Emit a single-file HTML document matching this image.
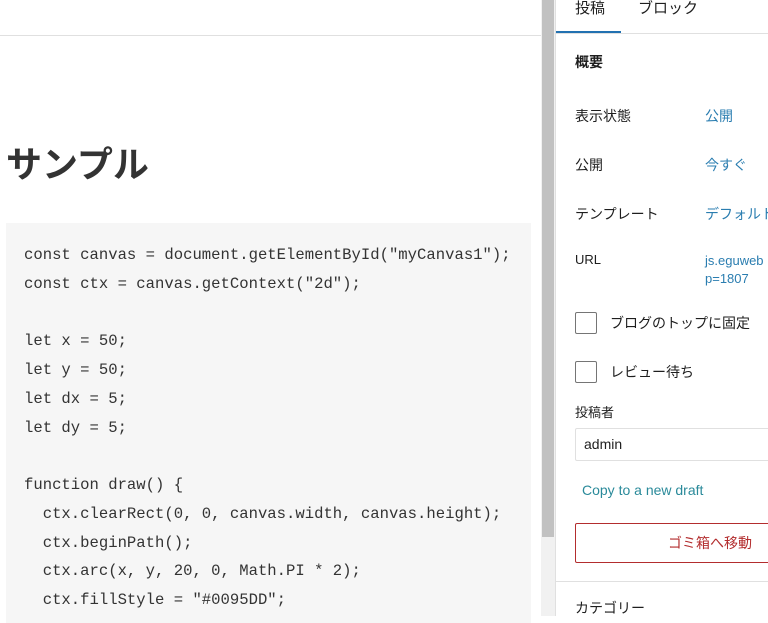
<!DOCTYPE html>
<html><head><meta charset="utf-8"><style>
*{margin:0;padding:0;box-sizing:border-box}
body{width:768px;height:616px;overflow:hidden;background:#fff;position:relative;font-family:"Liberation Sans","Noto Sans CJK JP",sans-serif;color:#1e1e1e}
.a{position:absolute;white-space:nowrap}
pre.a{font-family:"Liberation Mono","DejaVu Sans Mono",monospace;font-size:15.6px;line-height:28.75px;color:#333;white-space:pre}
.s{font-size:14px}
.b{color:#2a7db0}
</style></head><body>
<div class="a" style="left:0;top:35px;width:541px;height:1px;background:#e0e0e0"></div>
<div class="a" style="left:6px;top:136px;font-size:36px;font-weight:bold;color:#333">サンプル</div>
<div class="a" style="left:6px;top:223px;width:525px;height:400px;background:#f6f6f6"></div>
<pre class="a" style="left:24px;top:241px">const canvas = document.getElementById("myCanvas1");
const ctx = canvas.getContext("2d");

let x = 50;
let y = 50;
let dx = 5;
let dy = 5;

function draw() {
  ctx.clearRect(0, 0, canvas.width, canvas.height);
  ctx.beginPath();
  ctx.arc(x, y, 20, 0, Math.PI * 2);
  ctx.fillStyle = "#0095DD";</pre>
<div class="a" style="left:541px;top:0;width:14px;height:616px;background:#f1f1f1"></div>
<div class="a" style="left:542px;top:0;width:12px;height:537px;background:#c1c1c1"></div>
<div class="a" style="left:555px;top:0;width:1px;height:616px;background:#e0e0e0"></div>
<div class="a s" style="left:575px;top:-3px;font-size:15px">投稿</div>
<div class="a s" style="left:638px;top:-3px;font-size:15px">ブロック</div>
<div class="a" style="left:556px;top:33px;width:212px;height:1px;background:#e0e0e0"></div>
<div class="a" style="left:556px;top:31px;width:65px;height:2px;background:#2271b1"></div>
<div class="a s" style="left:575px;top:52px;font-weight:bold">概要</div>
<div class="a s" style="left:575px;top:106px">表示状態</div>
<div class="a s b" style="left:705px;top:106px">公開</div>
<div class="a s" style="left:575px;top:155px">公開</div>
<div class="a s b" style="left:705px;top:155px">今すぐ</div>
<div class="a s" style="left:575px;top:204px">テンプレート</div>
<div class="a s b" style="left:705px;top:204px">デフォルト</div>
<div class="a" style="left:575px;top:252px;font-size:13px">URL</div>
<div class="a b" style="left:705px;top:252px;font-size:13px;line-height:18px">js.eguweb<br>p=1807</div>
<div class="a" style="left:575px;top:312px;width:22px;height:22px;border:1.5px solid #757575;border-radius:2px"></div>
<div class="a s" style="left:610px;top:313px">ブログのトップに固定</div>
<div class="a" style="left:575px;top:361px;width:22px;height:22px;border:1.5px solid #757575;border-radius:2px"></div>
<div class="a s" style="left:610px;top:362px">レビュー待ち</div>
<div class="a" style="left:575px;top:402px;font-size:13px">投稿者</div>
<div class="a" style="left:575px;top:428px;width:200px;height:33px;border:1px solid #e0e0e0;border-radius:2px"></div>
<div class="a s" style="left:584px;top:436px">admin</div>
<div class="a s" style="left:582px;top:482px;color:#2a8a9a">Copy to a new draft</div>
<div class="a" style="left:575px;top:523px;width:200px;height:40px;border:1px solid #b32d2e;border-radius:2px"></div>
<div class="a s" style="left:668px;top:533px;color:#b32d2e">ゴミ箱へ移動</div>
<div class="a" style="left:556px;top:581px;width:212px;height:1px;background:#e0e0e0"></div>
<div class="a s" style="left:575px;top:598px">カテゴリー</div>
</body></html>
